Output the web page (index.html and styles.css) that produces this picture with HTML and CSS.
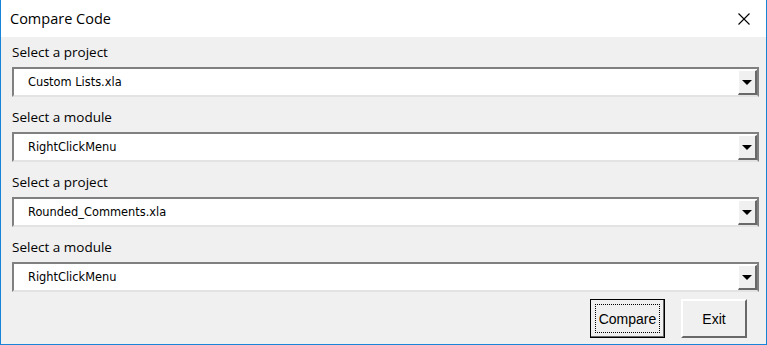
FILE: index.html
```html
<!DOCTYPE html>
<html>
<head>
<meta charset="utf-8">
<link rel="stylesheet" href="styles.css">
</head>
<body>
<div class="window">
  <div class="titlebar">
    <span class="title">Compare Code</span>
    <svg class="close" width="12" height="12" viewBox="0 0 12 12"><path d="M0.5 0.5 L11.5 11.5 M11.5 0.5 L0.5 11.5" stroke="#000" stroke-width="1.1" fill="none"/></svg>
  </div>
  <div class="body">
    <div class="field">
      <div class="label">Select a project</div>
      <div class="combo"><span class="value">Custom Lists.xla</span><span class="btn"><i class="arrow"></i></span></div>
    </div>
    <div class="field">
      <div class="label">Select a module</div>
      <div class="combo"><span class="value">RightClickMenu</span><span class="btn"><i class="arrow"></i></span></div>
    </div>
    <div class="field">
      <div class="label">Select a project</div>
      <div class="combo"><span class="value">Rounded_Comments.xla</span><span class="btn"><i class="arrow"></i></span></div>
    </div>
    <div class="field">
      <div class="label">Select a module</div>
      <div class="combo"><span class="value">RightClickMenu</span><span class="btn"><i class="arrow"></i></span></div>
    </div>
    <div class="actions">
      <div class="button default"><span class="focus">Compare</span></div>
      <div class="button">Exit</div>
    </div>
  </div>
</div>
</body>
</html>
```
FILE: styles.css
```css
* { box-sizing: border-box; }
html, body { margin: 0; padding: 0; }
body { width: 767px; height: 345px; overflow: hidden; background: #fff; }
.window {
  width: 767px; height: 345px;
  border: 1px solid #1883d7; border-top: none;
  display: flex; flex-direction: column;
  background: #f0f0f0;
}
.titlebar {
  height: 37px; background: #fff;
  display: flex; align-items: center; justify-content: space-between;
  padding: 0 16px 0 9px;
}
.title { font-family: "Open Sans", "Noto Sans", sans-serif; font-size: 14.5px; color: #000; }
.close { display: block; }
.body { flex: 1; padding: 2px 7px 0 10px; display: flex; flex-direction: column; }
.field { display: flex; flex-direction: column; }
.label {
  font-family: "Open Sans", "Noto Sans", sans-serif; font-size: 13.5px; color: #000;
  height: 28px; line-height: 27px; padding-left: 1px;
}
.combo {
  height: 30px; margin-bottom: 7px;
  display: flex; align-items: stretch;
  background: #fff;
  border-top: 2px solid #808080; border-left: 2px solid #808080;
  border-bottom: 2px solid #e3e3e3; border-right: 2px solid #808080;
  margin-left: 1px;
}
.value {
  flex: 1; font-family: "DejaVu Sans", sans-serif; font-size: 11.4px;
  line-height: 26px; padding-left: 14px; color: #000;
}
.btn {
  width: 19px; margin: 1px 0 0 0;
  background: #f0f0f0;
  border-left: 1px solid #fff; border-top: 1px solid #fff;
  border-right: 2px solid #696969; border-bottom: 2px solid #696969;
  display: flex; align-items: center; justify-content: center;
}
.arrow {
  display: block; width: 0; height: 0;
  border-left: 5px solid transparent; border-right: 5px solid transparent;
  border-top: 5px solid #000;
}
.actions { display: flex; justify-content: flex-end; gap: 16px; padding-right: 12px; margin-top: 0; }
.button {
  height: 39px; width: 66px;
  background: #f0f0f0;
  border-top: 2px solid #fff; border-left: 2px solid #fff;
  border-right: 2px solid #696969; border-bottom: 2px solid #696969;
  font-family: "Liberation Sans", Arial, sans-serif; font-size: 14px;
  display: flex; align-items: center; justify-content: center;
}
.button.default { width: 75px; border: 1px solid #000; box-shadow: inset -1px -1px 0 #696969; padding: 4px; }
.focus {
  flex: 1; align-self: stretch; display: flex; align-items: center; justify-content: center;
  border: 1px dotted #000;
}
```
